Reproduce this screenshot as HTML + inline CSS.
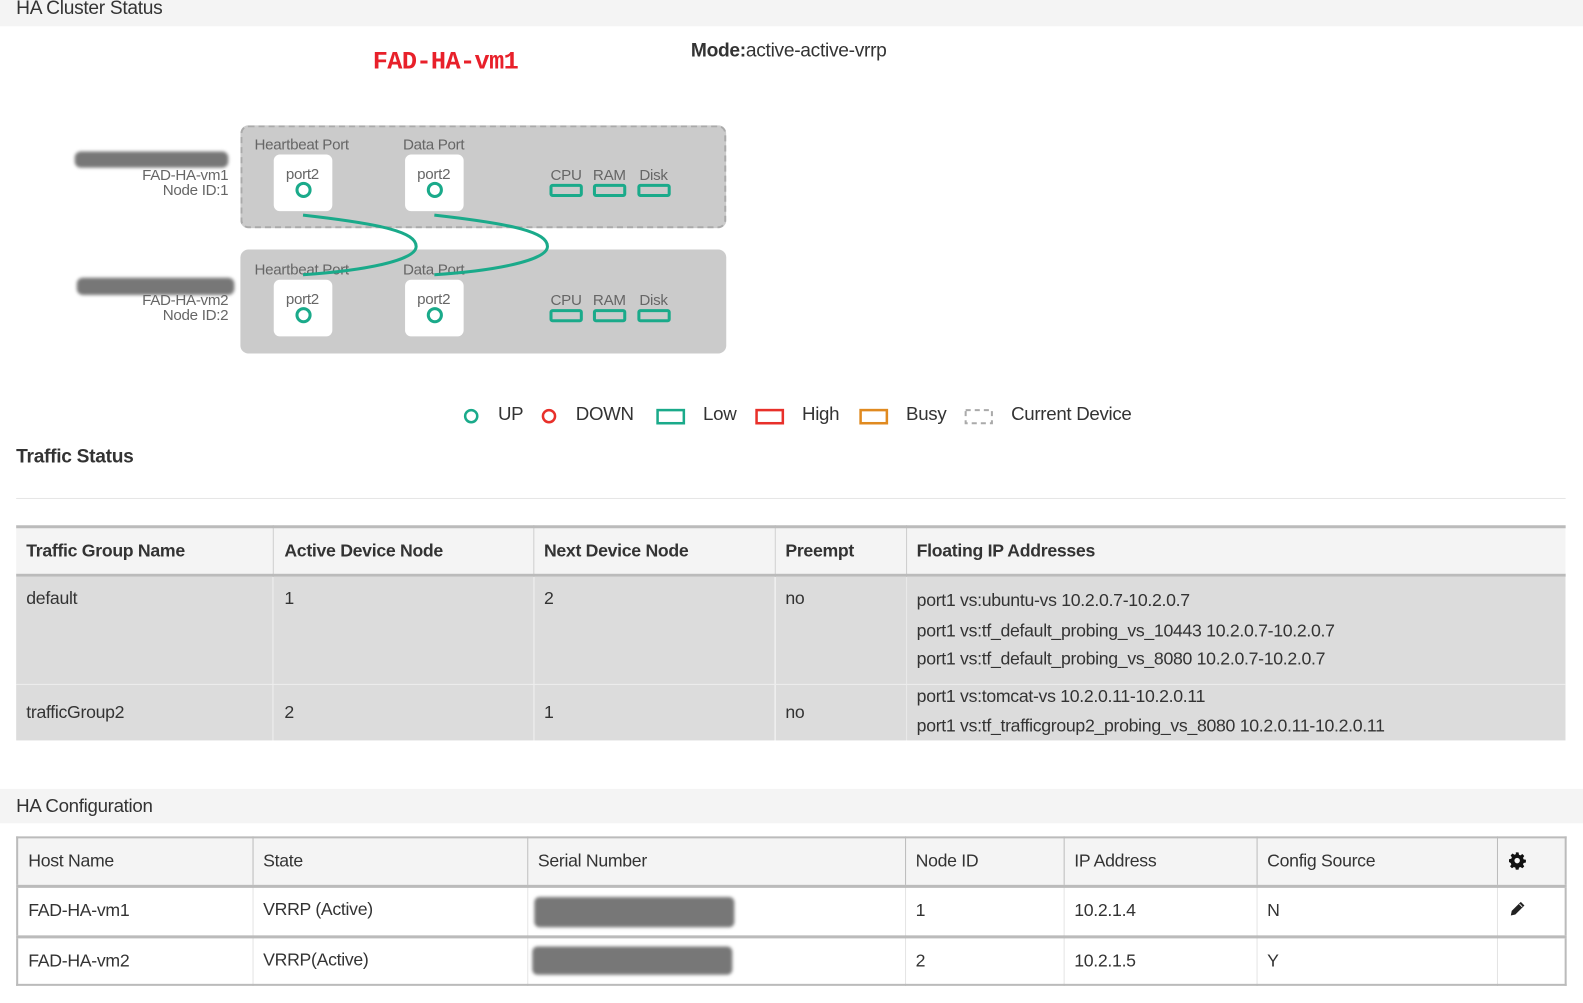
<!DOCTYPE html>
<html><head><meta charset="utf-8"><style>
*{margin:0;padding:0;box-sizing:border-box}
html{width:1583px;height:1003px;overflow:hidden}
body{width:1583px;height:1003px;background:#fff;position:relative;overflow:hidden;font-family:"Liberation Sans",sans-serif;color:#333}
#w{position:absolute;left:0;top:0;width:1568px;height:993px;transform:scale(1.0101);transform-origin:0 0}
.a{position:absolute;white-space:nowrap}
.band{position:absolute;left:0;width:1600px;background:#f4f4f4}
.lato{font-size:18px;letter-spacing:-0.3px;color:#333}
.dg{font-size:15px;color:#666;letter-spacing:-0.3px}
.pb{position:absolute;width:58px;height:56px;background:#fff;border-radius:6px}
.bar{position:absolute;width:33px;height:13px;border:3px solid #1aaa8a;border-radius:3px}
table{position:absolute;border-collapse:collapse;font-size:18px;letter-spacing:-0.3px;table-layout:fixed}
td,th{text-align:left;font-weight:normal;vertical-align:top;white-space:nowrap;overflow:hidden}
</style></head><body><div id="w">
<div class="band" style="top:0;height:26px"></div>
<div class="a lato" style="left:16px;top:-2px;font-size:19px">HA Cluster Status</div>
<div class="a" style="left:369px;top:47px;font-family:'Liberation Mono',monospace;font-weight:bold;font-size:25px;color:#e8202a;letter-spacing:-0.6px">FAD-HA-vm1</div>
<div class="a lato" style="left:684px;top:40px;font-size:19px"><b>Mode:</b>active-active-vrrp</div>

<div class="a" style="left:74px;top:150px;width:152px;height:16px;background:#777;border-radius:6px;filter:blur(1.5px)"></div>
<div class="a" style="left:76px;top:275px;width:156px;height:17px;background:#777;border-radius:6px;filter:blur(1.5px)"></div>
<div class="a dg" style="right:1342px;top:166px;text-align:right;line-height:15px">FAD-HA-vm1<br>Node ID:1</div>
<div class="a dg" style="right:1342px;top:290px;text-align:right;line-height:15px">FAD-HA-vm2<br>Node ID:2</div>

<div class="a" style="left:238px;top:124px;width:481px;height:102px;background:#cbcbcb;border:2px dashed #aaa;border-radius:8px"></div>
<div class="a" style="left:238px;top:247px;width:481px;height:103px;background:#cbcbcb;border-radius:8px"></div>

<div class="a dg" style="left:252px;top:135px">Heartbeat Port</div>
<div class="a dg" style="left:399px;top:135px">Data Port</div>
<div class="a dg" style="left:252px;top:259px">Heartbeat Port</div>
<div class="a dg" style="left:399px;top:259px">Data Port</div>

<div class="pb" style="left:271px;top:153px"></div>
<div class="pb" style="left:401px;top:153px"></div>
<div class="pb" style="left:271px;top:277px"></div>
<div class="pb" style="left:401px;top:277px"></div>
<div class="a dg" style="left:283px;top:164px">port2</div>
<div class="a dg" style="left:413px;top:164px">port2</div>
<div class="a dg" style="left:283px;top:288px">port2</div>
<div class="a dg" style="left:413px;top:288px">port2</div>

<div class="a dg" style="left:545px;top:165px">CPU</div>
<div class="a dg" style="left:587px;top:165px">RAM</div>
<div class="a dg" style="left:633px;top:165px">Disk</div>
<div class="a dg" style="left:545px;top:289px">CPU</div>
<div class="a dg" style="left:587px;top:289px">RAM</div>
<div class="a dg" style="left:633px;top:289px">Disk</div>
<div class="bar" style="left:544px;top:182px"></div>
<div class="bar" style="left:587px;top:182px"></div>
<div class="bar" style="left:631px;top:182px"></div>
<div class="bar" style="left:544px;top:306px"></div>
<div class="bar" style="left:587px;top:306px"></div>
<div class="bar" style="left:631px;top:306px"></div>

<svg class="a" style="left:0;top:0" width="1000" height="440">
<g fill="none" stroke="#1aaa8a" stroke-width="3">
<circle cx="300.5" cy="188" r="6.5"/><circle cx="430.5" cy="188" r="6.5"/>
<circle cx="300.5" cy="312" r="6.5"/><circle cx="430.5" cy="312" r="6.5"/>
<path d="M300 213 C380 222 412 230 412 244 C412 258 360 268 300 272"/>
<path d="M430 213 C510 222 542 230 542 244 C542 258 490 268 430 272"/>
<circle cx="466.5" cy="412" r="6" stroke-width="2.5"/>
<circle cx="543.5" cy="412" r="6" stroke="#e8302a" stroke-width="2.5"/>
<rect x="651" y="406" width="26" height="13" stroke-width="2.5"/>
<rect x="749" y="406" width="26" height="13" stroke="#e8302a" stroke-width="2.5"/>
<rect x="852" y="406" width="26" height="13" stroke="#e08a20" stroke-width="2.5"/>
<rect x="956" y="406" width="26" height="13" stroke="#aaa" stroke-width="2" stroke-dasharray="5 4"/>
</g></svg>
<div class="a lato" style="left:493px;top:399px;font-size:18.5px">UP</div>
<div class="a lato" style="left:570px;top:399px;font-size:18.5px">DOWN</div>
<div class="a lato" style="left:696px;top:399px;font-size:18.5px">Low</div>
<div class="a lato" style="left:794px;top:399px;font-size:18.5px">High</div>
<div class="a lato" style="left:897px;top:399px;font-size:18.5px">Busy</div>
<div class="a lato" style="left:1001px;top:399px;font-size:18.5px">Current Device</div>

<div class="a lato" style="left:16px;top:442px;font-size:19px;font-weight:bold">Traffic Status</div>
<div class="a" style="left:16px;top:493px;width:1534px;height:1px;background:#e6e6e6"></div>

<table style="left:16px;top:520px;width:1534px;font-size:17.5px">
<colgroup><col style="width:254px"><col style="width:258px"><col style="width:239px"><col style="width:130px"><col></colgroup>
<tr style="background:#f4f4f4;height:48px;border-top:3px solid #bbb;border-bottom:3px solid #bbb">
<th style="padding:12px 10px;font-weight:bold;border-right:1px solid #ccc">Traffic Group Name</th>
<th style="padding:12px 11px;font-weight:bold;border-right:1px solid #ccc">Active Device Node</th>
<th style="padding:12px 10px;font-weight:bold;border-right:1px solid #ccc">Next Device Node</th>
<th style="padding:12px 10px;font-weight:bold;border-right:1px solid #ccc">Preempt</th>
<th style="padding:12px 10px;font-weight:bold">Floating IP Addresses</th></tr>
<tr style="background:#dcdcdc;height:106px;border-bottom:1px solid #e8e8e8">
<td style="padding:11px 10px;border-right:1px solid #e8e8e8">default</td>
<td style="padding:11px 11px;border-right:1px solid #e8e8e8">1</td>
<td style="padding:11px 10px;border-right:1px solid #e8e8e8">2</td>
<td style="padding:11px 10px;border-right:1px solid #e8e8e8">no</td>
<td style="padding:0 10px;position:relative"><div style="position:relative;height:106px"><div class="a" style="top:13px">port1 vs:ubuntu-vs 10.2.0.7-10.2.0.7</div><div class="a" style="top:43px">port1 vs:tf_default_probing_vs_10443 10.2.0.7-10.2.0.7</div><div class="a" style="top:71px">port1 vs:tf_default_probing_vs_8080 10.2.0.7-10.2.0.7</div></div></td></tr>
<tr style="background:#dcdcdc;height:54px">
<td style="padding:17px 10px;border-right:1px solid #e8e8e8">trafficGroup2</td>
<td style="padding:17px 11px;border-right:1px solid #e8e8e8">2</td>
<td style="padding:17px 10px;border-right:1px solid #e8e8e8">1</td>
<td style="padding:17px 10px;border-right:1px solid #e8e8e8">no</td>
<td style="padding:0 10px"><div style="position:relative;height:54px"><div class="a" style="top:1px">port1 vs:tomcat-vs 10.2.0.11-10.2.0.11</div><div class="a" style="top:30px">port1 vs:tf_trafficgroup2_probing_vs_8080 10.2.0.11-10.2.0.11</div></div></td></tr>
</table>

<div class="band" style="top:781px;height:34px"></div>
<div class="a lato" style="left:16px;top:787px;font-size:18.5px">HA Configuration</div>

<table style="left:16px;top:828px;width:1535px;border:2px solid #bbb;font-size:17.5px">
<colgroup><col style="width:233px"><col style="width:272px"><col style="width:374px"><col style="width:157px"><col style="width:191px"><col style="width:238px"><col></colgroup>
<tr style="background:#f4f4f4;height:48px;border-bottom:3px solid #bbb">
<th style="padding:12px 10px;border-right:1px solid #bbb">Host Name</th>
<th style="padding:12px 10px;border-right:1px solid #bbb">State</th>
<th style="padding:12px 10px;border-right:1px solid #bbb">Serial Number</th>
<th style="padding:12px 10px;border-right:1px solid #bbb">Node ID</th>
<th style="padding:12px 10px;border-right:1px solid #bbb">IP Address</th>
<th style="padding:12px 10px;border-right:1px solid #bbb">Config Source</th>
<th style="padding:12px 10px"><svg width="18" height="18" viewBox="0 0 20 20" style="vertical-align:-3px"><path fill="#111" fill-rule="evenodd" d="M8.5 1h3l.5 2.5 1.6.7 2.1-1.4 2.1 2.1-1.4 2.1.7 1.6 2.5.5v3l-2.5.5-.7 1.6 1.4 2.1-2.1 2.1-2.1-1.4-1.6.7-.5 2.5h-3l-.5-2.5-1.6-.7-2.1 1.4-2.1-2.1 1.4-2.1-.7-1.6L1 11.5v-3l2.5-.5.7-1.6-1.4-2.1 2.1-2.1 2.1 1.4 1.6-.7zM10 7a3 3 0 1 0 0 6 3 3 0 0 0 0-6z"/></svg></th></tr>
<tr style="height:47px;border-bottom:3px solid #bbb">
<td style="padding:12px 10px;border-right:1px solid #e4e4e4">FAD-HA-vm1</td>
<td style="padding:11px 10px;border-right:1px solid #e4e4e4">VRRP (Active)</td>
<td style="padding:0;border-right:1px solid #e4e4e4;position:relative"><div style="position:absolute;left:6px;top:9px;width:198px;height:30px;background:#777;border-radius:5px;filter:blur(1.5px)"></div></td>
<td style="padding:12px 10px;border-right:1px solid #e4e4e4">1</td>
<td style="padding:12px 10px;border-right:1px solid #e4e4e4">10.2.1.4</td>
<td style="padding:12px 10px;border-right:1px solid #e4e4e4">N</td>
<td style="padding:12px 10px"><svg width="18" height="18" viewBox="0 0 20 20"><path fill="#222" d="M14 2l4 4-10 10-5 1 1-5z"/><path stroke="#fff" stroke-width="1" d="M12.5 4.5l3 3"/></svg></td></tr>
<tr style="height:48px">
<td style="padding:12px 10px;border-right:1px solid #e4e4e4">FAD-HA-vm2</td>
<td style="padding:11px 10px;border-right:1px solid #e4e4e4">VRRP(Active)</td>
<td style="padding:0;border-right:1px solid #e4e4e4;position:relative"><div style="position:absolute;left:4px;top:8px;width:198px;height:28px;background:#777;border-radius:5px;filter:blur(1.5px)"></div></td>
<td style="padding:12px 10px;border-right:1px solid #e4e4e4">2</td>
<td style="padding:12px 10px;border-right:1px solid #e4e4e4">10.2.1.5</td>
<td style="padding:12px 10px;border-right:1px solid #e4e4e4">Y</td>
<td></td></tr>
</table>
</div></body></html>
